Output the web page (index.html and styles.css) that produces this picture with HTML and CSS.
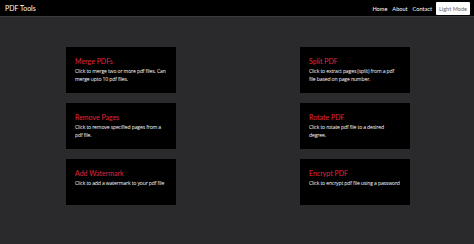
FILE: index.html
```html
<!DOCTYPE html>
<html lang="en">
<head>
<meta charset="UTF-8">
<meta name="viewport" content="width=device-width, initial-scale=1.0">
<title>PDF Tools</title>
<link rel="stylesheet" href="styles.css">
</head>
<body>

<nav class="navbar">
    <div class="brand">PDF Tools</div>
    <div class="links">
        <a href="#">Home</a>
        <a href="#">About</a>
        <a href="#">Contact</a>
        <button class="mode">Light Mode</button>
    </div>
</nav>

<div class="tools">
    <div class="card">
        <h3>Merge PDFs</h3>
        <p>Click to merge two or more pdf files. Can merge upto 10 pdf files.</p>
    </div>
    <div class="card">
        <h3>Split PDF</h3>
        <p>Click to extract pages (split) from a pdf file based on page number.</p>
    </div>
    <div class="card">
        <h3>Remove Pages</h3>
        <p>Click to remove specified pages from a pdf file.</p>
    </div>
    <div class="card">
        <h3>Rotate PDF</h3>
        <p>Click to rotate pdf file to a desired degree.</p>
    </div>
    <div class="card">
        <h3>Add Watermark</h3>
        <p>Click to add a watermark to your pdf file</p>
    </div>
    <div class="card">
        <h3>Encrypt PDF</h3>
        <p>Click to encrypt pdf file using a password</p>
    </div>
</div>

</body>
</html>
```

FILE: styles.css
```css
    body {
        font-family: Lato, "Noto Sans", sans-serif;
        background-color: #2a2a2c;
        margin: 0;
        padding: 0;
    }
    .navbar {
        display: flex;
        justify-content: space-between;
        align-items: center;
        height: 16px;
        background-color: #000;
        border-bottom: 1px solid #3a3a3c;
        padding: 0 4px 0 5px;
    }
    .brand {
        color: #fff;
        font-size: 7px;
    }
    .links {
        display: flex;
        align-items: center;
        gap: 5px;
    }
    .links a {
        color: #fff;
        text-decoration: none;
        font-size: 5.6px;
    }
    .mode {
        font-family: inherit;
        font-size: 5.6px;
        color: #666;
        background-color: #fff;
        border: none;
        border-radius: 1px;
        padding: 0 3px;
        height: 13px;
        margin-left: -1px;
    }
    .tools {
        display: grid;
        grid-template-columns: 110px 110px;
        column-gap: 124px;
        row-gap: 10px;
        padding: 30px 0 0 66px;
    }
    .card {
        background-color: #000;
        padding: 10px 9px 9px 9px;
        min-height: 27px;
    }
    .card h3 {
        color: #e0273f;
        font-size: 7px;
        font-weight: normal;
        margin: 0 0 3px 0;
    }
    .card p {
        color: #fff;
        font-family: "Open Sans", sans-serif;
        font-size: 5.1px;
        letter-spacing: -0.14px;
        line-height: 7.5px;
        margin: 0;
    }
```
